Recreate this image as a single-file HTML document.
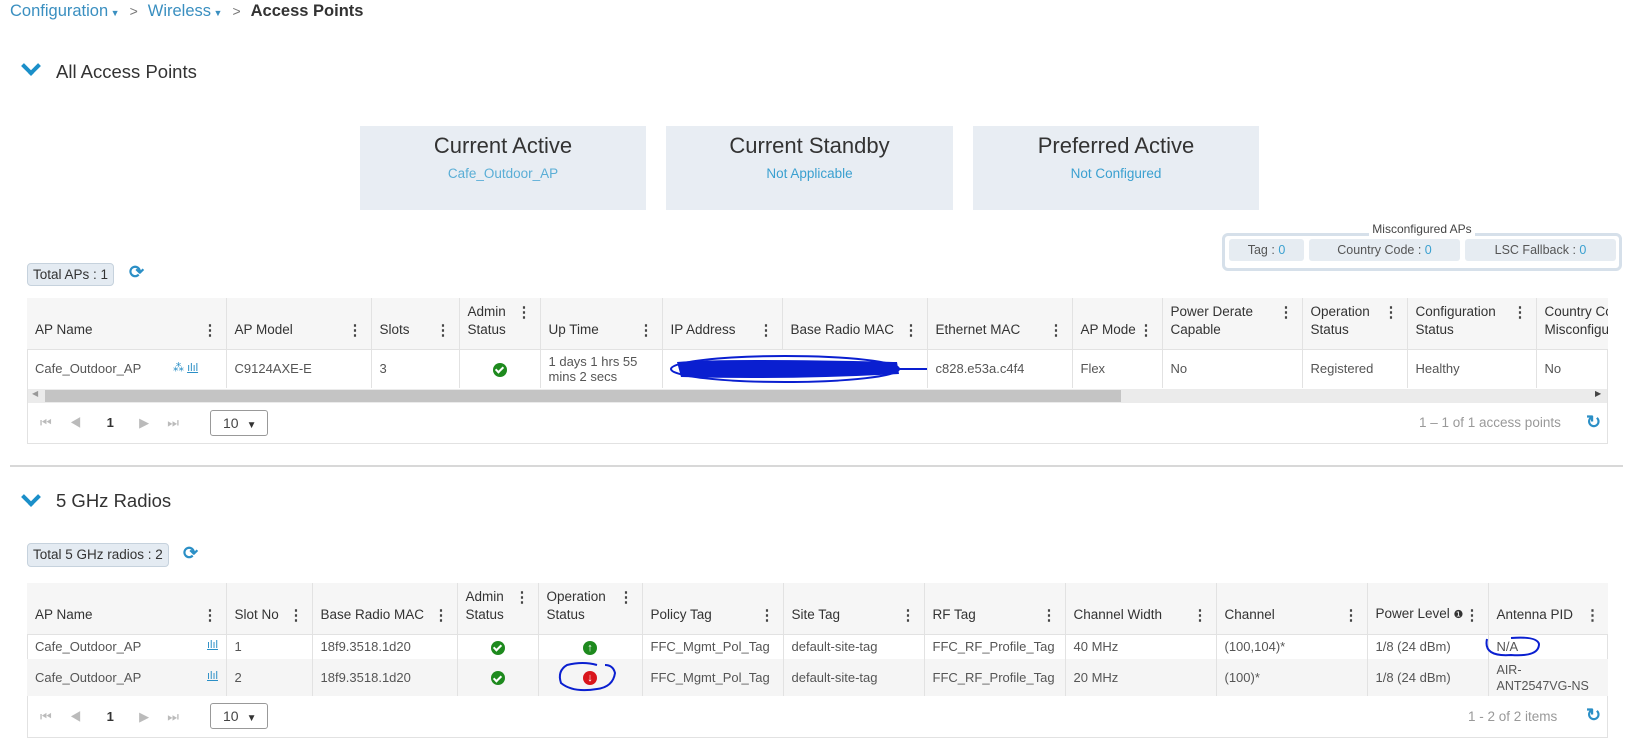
<!DOCTYPE html>
<html><head><meta charset="utf-8"><style>
*{box-sizing:border-box;margin:0;padding:0}
body{width:1629px;height:748px;background:#fff;font-family:"Liberation Sans",sans-serif;color:#333;position:relative;overflow:hidden;font-size:13px}
.a{position:absolute}
.bc{top:2px;left:10px;font-size:16.5px;color:#3a8fc0;white-space:nowrap}
.bc b{color:#333}
.bc .g{color:#777;margin:0 10px;font-size:14px}
.chev{width:14px;height:14px;border-right:4px solid #1b8fc9;border-bottom:4px solid #1b8fc9;transform:rotate(45deg)}
.h2{font-size:18.5px;color:#333}
.card{background:#e8edf3;top:126px;height:84px;text-align:center}
.card .t{font-size:22px;color:#333;margin-top:7px}
.card .s{font-size:13.5px;color:#3aa0d0;margin-top:7px}
.pill{background:#e4ebf2;border:1px solid #c6d2dd;border-radius:4px;font-size:13.5px;color:#333;padding:3px 5px}
.mis{left:1222px;top:233px;width:400px;height:38px;border:3px solid #d6e0ea;border-radius:6px}
.mis .l{position:absolute;top:-14px;left:0;width:100%;text-align:center;font-size:12px;color:#444}
.mis .l span{background:#fff;padding:0 3px}
.mp{position:absolute;top:3px;height:22px;background:#e6ecf2;border-radius:3px;font-size:12.5px;color:#555;text-align:center;line-height:22px}
.mp i{font-style:normal;color:#3aa0d0}
table{border-collapse:collapse;table-layout:fixed;position:absolute;left:27px;width:1581px}
td{border-left:1px solid #e2e2e2;padding:0 8px;white-space:nowrap;overflow:hidden;font-size:13px;color:#555;vertical-align:middle;position:relative}
th{border-left:1px solid #e2e2e2;background:#f6f6f6;font-weight:normal;font-size:13.5px;color:#333;text-align:left;padding:0 8px;position:relative;vertical-align:bottom;padding-bottom:10px;line-height:18px;overflow:hidden;white-space:nowrap}
th .d{position:absolute;right:8px;bottom:11px;font-weight:bold;color:#444;font-size:15px;line-height:15px}
th .d.t2{bottom:29px}
tr.hd{border-bottom:1px solid #e2e2e2}
.box{border:1px solid #e2e2e2;position:absolute;left:27px;width:1581px}
.ok{display:inline-block;width:14px;height:14px;border-radius:50%;background:#1e8a1e;position:relative;vertical-align:middle}
.ok:after{content:"";position:absolute;left:4px;top:2.5px;width:3px;height:6px;border-right:2px solid #fff;border-bottom:2px solid #fff;transform:rotate(45deg)}
.up{display:inline-block;width:14px;height:14px;border-radius:50%;background:#1e8a1e;color:#fff;font-size:11px;line-height:14px;text-align:center;font-weight:bold;vertical-align:middle}
.dn{background:#d9161c}
.pg{font-size:13px;color:#bbb}
.sel{border:1px solid #999;border-radius:3px;width:58px;height:26px;font-size:14px;color:#444;padding:4px 0 0 12px}
.sel span{font-size:10px;margin-left:8px;color:#333}
.cnt{font-size:13.5px;color:#999}
.rf{color:#2b8fc6;font-size:18px;font-weight:bold}
.ic{position:absolute;color:#2b8fc6;font-size:11px;top:50%;margin-top:-8px}
</style></head><body>
<div class="a bc">Configuration<span style="font-size:9px"> ▼</span><span class="g">&gt;</span>Wireless<span style="font-size:9px"> ▼</span><span class="g">&gt;</span><b>Access Points</b></div>

<div class="a chev" style="left:24px;top:59px"></div>
<div class="a h2" style="left:56px;top:61px">All Access Points</div>

<div class="a card" style="left:360px;width:286px"><div class="t">Current Active</div><div class="s" style="color:#5aaed6">Cafe_Outdoor_AP</div></div>
<div class="a card" style="left:666px;width:287px"><div class="t">Current Standby</div><div class="s">Not Applicable</div></div>
<div class="a card" style="left:973px;width:286px"><div class="t">Preferred Active</div><div class="s">Not Configured</div></div>

<div class="a mis"><div class="l"><span>Misconfigured APs</span></div>
<div class="mp" style="left:4px;width:75px">Tag : <i>0</i></div>
<div class="mp" style="left:84px;width:151px">Country Code : <i>0</i></div>
<div class="mp" style="left:240px;width:151px">LSC Fallback : <i>0</i></div>
</div>

<div class="a pill" style="left:27px;top:263px;height:23px">Total APs : 1</div>
<div class="a rf" style="left:129px;top:262px">⟳</div>

<div class="box" style="top:298px;height:146px"></div>
<table style="top:298px">
<colgroup><col style="width:199px"><col style="width:145px"><col style="width:88px"><col style="width:81px"><col style="width:122px"><col style="width:120px"><col style="width:145px"><col style="width:145px"><col style="width:90px"><col style="width:140px"><col style="width:105px"><col style="width:129px"><col style="width:72px"></colgroup>
<tr class="hd" style="height:51px">
<th style="border-left:0">AP Name<span class="d">⋮</span></th><th>AP Model<span class="d">⋮</span></th><th>Slots<span class="d">⋮</span></th><th>Admin<br>Status<span class="d t2">⋮</span></th><th>Up Time<span class="d">⋮</span></th><th>IP Address<span class="d">⋮</span></th><th>Base Radio MAC<span class="d">⋮</span></th><th>Ethernet MAC<span class="d">⋮</span></th><th>AP Mode<span class="d">⋮</span></th><th>Power Derate<br>Capable<span class="d t2">⋮</span></th><th>Operation<br>Status<span class="d t2">⋮</span></th><th>Configuration<br>Status<span class="d t2">⋮</span></th><th>Country Co<br>Misconfigu</th>
</tr>
<tr style="height:39px">
<td style="border-left:0">Cafe_Outdoor_AP<span class="ic" style="left:146px">⁂ <u>ılıl</u></span></td><td>C9124AXE-E</td><td>3</td><td style="text-align:center"><span class="ok"></span></td><td style="white-space:normal;line-height:15px">1 days 1 hrs 55 mins 2 secs</td>
<td colspan="2" style="overflow:visible"><svg width="260" height="34" style="position:absolute;left:4px;top:2px"><ellipse cx="118" cy="17" rx="114" ry="13" fill="none" stroke="#0a1fd0" stroke-width="2"/><path d="M10 10 Q60 6 230 10 L232 22 Q120 28 14 25 Z" fill="#0a1fd0"/><path d="M228 17 L262 17" stroke="#0a1fd0" stroke-width="2"/></svg></td>
<td>c828.e53a.c4f4</td><td>Flex</td><td>No</td><td>Registered</td><td>Healthy</td><td>No</td></tr>
</table>
<div class="a" style="left:28px;top:389px;width:1579px;height:14px;background:#ebebeb"></div>
<div class="a" style="left:45px;top:390px;width:1076px;height:12px;background:#c4c4c4"></div>
<div class="a" style="left:32px;top:389px;font-size:8px;color:#999">◀</div>
<div class="a" style="left:1595px;top:389px;font-size:8px;color:#444">▶</div>
<div class="a pg" style="left:40px;top:415px">⏮&nbsp;&nbsp;&nbsp;&nbsp;&nbsp;◀&nbsp;&nbsp;&nbsp;&nbsp;&nbsp;&nbsp;&nbsp;<b style="color:#333">1</b>&nbsp;&nbsp;&nbsp;&nbsp;&nbsp;&nbsp;&nbsp;▶&nbsp;&nbsp;&nbsp;&nbsp;&nbsp;⏭</div>
<div class="a sel" style="left:210px;top:410px">10<span>▼</span></div>
<div class="a cnt" style="left:1419px;top:415px">1 – 1 of 1 access points</div>
<div class="a rf" style="left:1586px;top:412px">↻</div>

<div class="a" style="left:10px;top:465px;width:1613px;height:2px;background:#d8d8d8"></div>

<div class="a chev" style="left:24px;top:490px"></div>
<div class="a h2" style="left:56px;top:490px">5 GHz Radios</div>

<div class="a pill" style="left:27px;top:543px;height:24px">Total 5 GHz radios : 2</div>
<div class="a rf" style="left:183px;top:543px">⟳</div>

<div class="box" style="top:583px;height:155px"></div>
<table style="top:583px">
<colgroup><col style="width:199px"><col style="width:86px"><col style="width:145px"><col style="width:81px"><col style="width:104px"><col style="width:141px"><col style="width:141px"><col style="width:141px"><col style="width:151px"><col style="width:151px"><col style="width:121px"><col style="width:120px"></colgroup>
<tr class="hd" style="height:51px">
<th style="border-left:0">AP Name<span class="d">⋮</span></th><th>Slot No<span class="d">⋮</span></th><th>Base Radio MAC<span class="d">⋮</span></th><th>Admin<br>Status<span class="d t2">⋮</span></th><th>Operation<br>Status<span class="d t2">⋮</span></th><th>Policy Tag<span class="d">⋮</span></th><th>Site Tag<span class="d">⋮</span></th><th>RF Tag<span class="d">⋮</span></th><th>Channel Width<span class="d">⋮</span></th><th>Channel<span class="d">⋮</span></th><th>Power Level <span style="font-size:11px">❶</span><span class="d">⋮</span></th><th>Antenna PID<span class="d">⋮</span></th>
</tr>
<tr style="height:25px">
<td style="border-left:0">Cafe_Outdoor_AP<span class="ic" style="left:180px"><u>ılıl</u></span></td><td>1</td><td>18f9.3518.1d20</td><td style="text-align:center"><span class="ok"></span></td><td style="text-align:center"><span class="up">↑</span></td><td>FFC_Mgmt_Pol_Tag</td><td>default-site-tag</td><td>FFC_RF_Profile_Tag</td><td>40 MHz</td><td>(100,104)*</td><td>1/8 (24 dBm)</td><td style="overflow:visible">N/A<svg width="70" height="26" style="position:absolute;left:-8px;top:-1px"><path d="M6 5 Q2 23 30 21 Q58 23 58 10 Q56 2 30 4" fill="none" stroke="#0a1fd0" stroke-width="2"/></svg></td></tr>
<tr style="height:37px;background:#f5f5f5">
<td style="border-left:0">Cafe_Outdoor_AP<span class="ic" style="left:180px"><u>ılıl</u></span></td><td>2</td><td>18f9.3518.1d20</td><td style="text-align:center"><span class="ok"></span></td><td style="text-align:center;overflow:visible"><span class="up dn">↓</span><svg width="72" height="36" style="position:absolute;left:14px;top:0"><path d="M44 6 Q30 2 14 6 Q4 12 8 24 Q20 34 44 30 Q60 28 62 14 Q60 6 52 6" fill="none" stroke="#0a1fd0" stroke-width="2"/></svg></td><td>FFC_Mgmt_Pol_Tag</td><td>default-site-tag</td><td>FFC_RF_Profile_Tag</td><td>20 MHz</td><td>(100)*</td><td>1/8 (24 dBm)</td><td style="white-space:normal;line-height:16px;font-size:12.5px">AIR-<br>ANT2547VG-NS</td></tr>
</table>
<div class="a pg" style="left:40px;top:709px">⏮&nbsp;&nbsp;&nbsp;&nbsp;&nbsp;◀&nbsp;&nbsp;&nbsp;&nbsp;&nbsp;&nbsp;&nbsp;<b style="color:#333">1</b>&nbsp;&nbsp;&nbsp;&nbsp;&nbsp;&nbsp;&nbsp;▶&nbsp;&nbsp;&nbsp;&nbsp;&nbsp;⏭</div>
<div class="a sel" style="left:210px;top:703px">10<span>▼</span></div>
<div class="a cnt" style="left:1468px;top:709px">1 - 2 of 2 items</div>
<div class="a rf" style="left:1586px;top:705px">↻</div>
</body></html>
